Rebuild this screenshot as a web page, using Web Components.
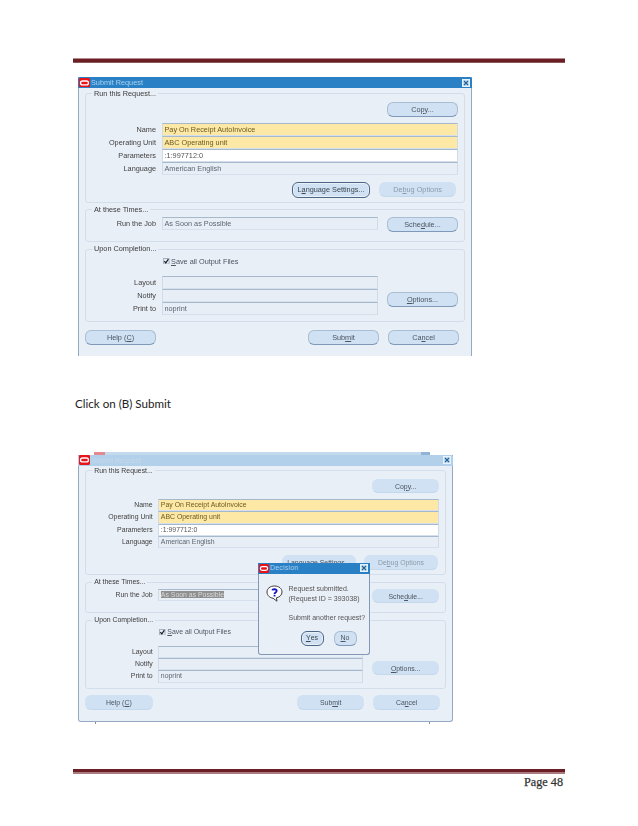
<!DOCTYPE html>
<html lang="en"><head><meta charset="utf-8"><title>Page 48</title>
<style>
html,body{margin:0;background:#fff}
body{width:638px;height:826px;overflow:hidden;font-family:"Liberation Sans",Arial,sans-serif}
</style></head><body>
<doc-page>
  <doc-rule></doc-rule>
  <request-form id="a" sx="1" sy="1" fs="7.3" title="Submit Request" active style="margin:14px 0 0 77.5px"></request-form>
  <doc-text style="margin:40px 0 0 75px">Click on (B) Submit</doc-text>
  <window-ghost style="margin:40px 0 0 94px"></window-ghost>
  <request-form id="b" sx="0.95" sy="0.957" fs="6.9" title="Submit Request" style="margin:0 0 0 78px">
    <decision-box style="position:absolute;left:179.5px;top:108px"></decision-box>
  </request-form>
  <window-ticks style="margin:0 0 0 95px"></window-ticks>
  <doc-footer></doc-footer>
</doc-page>
<script>
const define = (n, render) => customElements.define(n, class extends HTMLElement {
  constructor(){ super(); this.attachShadow({mode:'open'}); }
  connectedCallback(){ this.shadowRoot.innerHTML = render(this); }
});
const logo = s => `<svg width="${s}" height="${s*.9}" viewBox="0 0 10 9" style="flex:none;display:block"><rect width="10" height="9" rx="1" fill="#e8141c"/><rect x="1.4" y="2.7" width="7.2" height="3.6" rx="1.8" fill="none" stroke="#fff" stroke-width="1.2"/></svg>`;
const closer = s => `<svg width="${s}" height="${s}" viewBox="0 0 8 8" style="flex:none;display:block"><rect x=".5" y=".5" width="7" height="7" fill="#c4def2" stroke="#e6f1fa"/><path d="M2 2l4 4M6 2l-4 4" stroke="#1f5f96" stroke-width="1.1"/></svg>`;

define('doc-page', () => `<style>:host{display:flex;flex-direction:column;box-sizing:border-box;width:638px;height:826px;padding-top:58px;overflow:hidden}</style><slot></slot>`);
define('doc-rule', () => `<style>:host{display:block;box-sizing:border-box;margin:0 73px;height:5px;width:492px;background:#6b1f24;border-top:1.5px solid #b58c8e;border-bottom:.5px solid #8d5558}</style>`);
define('doc-text', () => `<style>:host{display:block;font:11.6px/16px Lato,"Open Sans",sans-serif;color:#222}</style><slot></slot>`);
define('doc-footer', () => `<style>
:host{display:block;margin:45px 73px 0;width:492px}
.r{box-sizing:border-box;height:5px;background:#6b1f24;border-bottom:2px solid #a97c7f}
.p{font:12.2px/16px "Liberation Serif",serif;-webkit-text-stroke:.25px #333;color:#333;text-align:right;padding:0 2px 0 0}
</style><div class="r"></div><div class="p">Page 48</div>`);
define('window-ghost', () => `<style>
:host{display:flex;align-items:flex-start;width:336px;height:3px;filter:blur(.4px)}
i{display:block;height:3px}
</style><i style="width:11px;background:#e08a90"></i><i style="flex:1;background:#c3daee"></i><i style="width:9px;background:#8fb4d6"></i>`);
define('window-ticks', () => `<style>
:host{display:flex;justify-content:space-between;width:335px;height:2px}
i{display:block;width:1px;height:2px;background:#8b9098}
</style><i></i><i></i>`);

define('ui-button', h => {
  const a = h.hasAttribute('active'), def = h.hasAttribute('default'), dis = h.hasAttribute('disabled');
  return `<style>
:host{display:block;width:var(--bw,71px);height:var(--bh,15px)}
div{box-sizing:border-box;display:flex;align-items:center;justify-content:center;width:100%;height:100%;white-space:nowrap;
 background:#cfe1f2;border-radius:var(--br,6px);color:${dis?'#8b9bab':'#4c5561'};
 border:1px solid ${a?'#a9bdd3':'#cfe1f2'};border-bottom-color:${a?'#7f9ab8':'#c4d8eb'};
 ${def?'border:1.5px solid #4d6685;box-shadow:inset 0 0 0 1px #e9f1f8;color:#3c4550;':''}}
</style><div><slot></slot></div>`});

define('oa-field', h => {
  const k = h.getAttribute('kind') || 'ro';
  const bg = {req:'#fde8a6', edit:'#fff', ro:'#e8eef6'}[k];
  const sel = h.hasAttribute('selected');
  const v = h.getAttribute('value') || '';
  return `<style>
:host{display:flex;align-items:stretch;height:var(--fh,13px);color:#444}
label{flex:none;box-sizing:border-box;width:var(--lw,77.5px);padding-right:var(--lg,6px);text-align:right;line-height:var(--fh,13px);color:#3f3f3f;white-space:nowrap}
.f{flex:1;box-sizing:border-box;min-width:0;background:${bg};border:solid #d0dbe8;border-top-color:#a6b8cc;border-bottom-color:#d6e0ec;border-width:1px 1px .5px .5px;padding-left:1.5px;line-height:calc(var(--fh,13px) - 2px);white-space:nowrap;overflow:hidden;color:${k==='req'?'#6b5a20':k==='edit'?'#555':'#5c6570'}}
mark{background:#8f8f8f;color:#d9d9d9}
</style><label>${h.getAttribute('label')||''}</label><div class="f">${sel?`<mark>${v}</mark>`:v}</div>`});

define('oa-group', h => `<style>
:host{display:block;border:1px solid #d3deea;border-radius:3px}
.l{display:block;width:fit-content;background:#e9eff7;color:#3a3a3a;padding:0 2px;margin:-5.5px 0 0 6px;height:10px;line-height:10px;white-space:nowrap}
.g{display:grid;grid-template-columns:minmax(0,1fr) var(--bw,71px);column-gap:var(--cg,9px);padding:0 var(--pr,6px) 0 0}
</style><span class="l">${h.getAttribute('legend')}</span><div class="g"><slot></slot></div>`);

define('request-form', h => {
  const sx=+h.getAttribute('sx'), sy=+h.getAttribute('sy'), fs=h.getAttribute('fs');
  const X=n=>(n*sx).toFixed(2)+'px', Y=n=>(n*sy).toFixed(2)+'px';
  const act=h.hasAttribute('active')?'active':'';
  return `<style>
*{box-sizing:border-box}
:host{display:block;position:relative;width:${X(394.5)};height:${Y(279)};font-size:${fs}px;
 --bw:${X(71)};--bh:${Y(15)};--fh:${Y(13)};--lw:${X(76)};--lg:${X(6)};--cg:${X(9)};--pr:${X(5.5)}}
.w{height:100%;display:flex;flex-direction:column;background:#e9eff7;border:solid #94a9c3;border-width:0 1px ${act?0:'1.5px'} 1px;border-radius:${act?'0':'0 0 3px 3px'};filter:blur(.35px)}
.t{flex:none;display:flex;align-items:center;gap:1.5px;height:${Y(11)};background:${act?'#2a80c4':'#b3d0ea'};color:${act?'#a9d2f2':'#c3d9ec'};padding:0 2px 0 1px;margin:0 -1px;border-radius:2px 2px 0 0}
.t span{flex:1}
.b{flex:1;padding:${Y(5)} ${X(6.5)} 0 ${X(6.5)};display:flex;flex-direction:column}
.full{grid-column:1/-1}
.c1{grid-column:1}
.c2{grid-column:2}
.rowb{grid-column:1/-1;display:flex;justify-content:flex-end;gap:${X(9)};padding-right:${X(2)}}
.chk{grid-column:1;grid-row:1;display:flex;align-items:center;gap:1.5px;padding-left:${X(77)};color:#4c5561;height:${Y(12)};margin-top:${Y(1)}}
oa-group+oa-group{margin-top:${Y(6.5)}}
.foot{display:flex;justify-content:space-between;padding-right:${X(5.5)};margin-top:${act?8:6.5}px}
.foot div{display:flex;gap:${X(9)}}
</style>
<div class="w">
 <div class="t">${logo(11)}<span>${h.getAttribute('title')}</span>${closer(8)}</div>
 <div class="b">
  <oa-group legend="Run this Request...">
    <ui-button class="c2" ${act} style="margin-top:${Y(3.5)}">Co<u>p</u>y...</ui-button>
    <oa-field class="full" style="margin-top:${Y(5.5)}" kind="req" label="Name" value="Pay On Receipt AutoInvoice"></oa-field>
    <oa-field class="full" kind="req" label="Operating Unit" value="ABC Operating unit"></oa-field>
    <oa-field class="full" kind="edit" label="Parameters" value=":1:997712:0"></oa-field>
    <oa-field class="full" label="Language" value="American English"></oa-field>
    <div class="rowb" style="margin:${Y(7)} 0 ${Y(4)}">
      <ui-button ${act} ${act?'default':''} style="--bw:${X(78)};--bh:${Y(16)}">L<u>a</u>nguage Settings...</ui-button>
      <ui-button disabled style="--bw:${X(77)};--bh:${Y(15.5)}">De<u>b</u>ug Options</ui-button>
    </div>
  </oa-group>
  <oa-group legend="At these Times...">
    <oa-field style="margin-top:${Y(2)}" label="Run the Job" value="As Soon as Possible" ${act?'':'selected'}></oa-field>
    <ui-button style="margin:${Y(2)} 0 ${Y(9.5)}" ${act}>Sche<u>d</u>ule...</ui-button>
  </oa-group>
  <oa-group legend="Upon Completion...">
    <div class="chk"><svg width="6.5" height="6.5" viewBox="0 0 7 7"><rect x=".5" y=".5" width="6" height="6" fill="#e8eef6" stroke="#9fb0c4"/><path d="M1.4 3.4l1.6 1.9 2.8-4" fill="none" stroke="#222" stroke-width="1.3"/></svg><span><u>S</u>ave all Output Files</span></div>
    <oa-field class="c1" style="grid-row:2;margin-top:${Y(8.5)}" label="Layout"></oa-field>
    <oa-field class="c1" style="grid-row:3" label="Notify"></oa-field>
    <ui-button class="c2" ${act} style="grid-row:3/5;margin-top:${Y(3)}"><u>O</u>ptions...</ui-button>
    <oa-field class="c1" style="grid-row:4;margin-bottom:${act?6:5}px" label="Print to" value="noprint"></oa-field>
  </oa-group>
  <div class="foot">
    <ui-button ${act}>Help (<u>C</u>)</ui-button>
    <div><ui-button ${act}>Sub<u>m</u>it</ui-button><ui-button ${act}>Ca<u>n</u>cel</ui-button></div>
  </div>
 </div>
</div><slot></slot>`});

define('decision-box', () => `<style>
*{box-sizing:border-box}
:host{display:block;width:112.5px;height:92px;font:7px/10px "Liberation Sans",Arial,sans-serif;color:#555;filter:blur(.3px);z-index:2}
.w{height:100%;display:flex;flex-direction:column;background:#e9eff7;border:1px solid #8199b5;border-width:0 1px 1.5px;border-radius:0 0 3px 3px}
.t{flex:none;display:flex;align-items:center;gap:1.5px;height:10.5px;margin:0 -1px;padding:0 2px 0 1px;background:#2a80c4;color:#a9d2f2}
.t span{flex:1;letter-spacing:.2px}
.m{display:flex;gap:6px;padding:10px 0 0 7px}
p{margin:0;white-space:nowrap}
.q{margin-top:9.5px}
.a{display:flex;gap:10px;margin:7.5px 0 0 42px;--bw:23px;--bh:15px}
</style><div class="w"><div class="t">${logo(10)}<span>Decision</span>${closer(8)}</div>
<div class="m"><svg width="17" height="17" viewBox="0 0 17 17" style="flex:none;margin-top:1px"><path d="M8.5 1C4 1 1 3.6 1 7s3 6 6 6.2L11 16.2l-.6-3.4C13.8 12 16 10 16 7c0-3.4-3-6-7.5-6z" fill="#fff" stroke="#3c3c3c" stroke-width="1"/><path d="M6.3 5.4C6.4 3.9 10.6 3.7 10.7 5.8c0 1.7-2.2 1.5-2.2 3.2" fill="none" stroke="#1414c8" stroke-width="1.8"/><rect x="7.6" y="9.8" width="1.8" height="1.7" fill="#1414c8"/></svg>
<div><p>Request submitted.</p><p>(Request ID = 393038)</p><p class="q">Submit another request?</p></div></div>
<div class="a"><ui-button active default><u>Y</u>es</ui-button><ui-button active><u>N</u>o</ui-button></div></div>`);
</script>
</body></html>
